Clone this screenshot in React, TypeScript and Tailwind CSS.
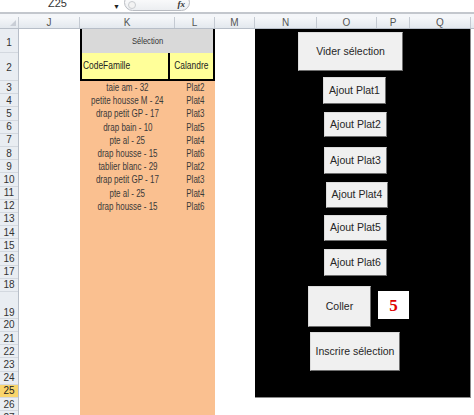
import React from "react";

const F = "font-['Liberation_Sans',Arial,sans-serif]";

const items = [
  ["taie am - 32", "Plat2"],
  ["petite housse M - 24", "Plat4"],
  ["drap petit GP - 17", "Plat3"],
  ["drap bain - 10", "Plat5"],
  ["pte al - 25", "Plat4"],
  ["drap housse - 15", "Plat6"],
  ["tablier blanc - 29", "Plat2"],
  ["drap petit GP - 17", "Plat3"],
  ["pte al - 25", "Plat4"],
  ["drap housse - 15", "Plat6"],
];

const cols = [
  { label: "J", w: "w-[61px]" },
  { label: "K", w: "w-[95px]" },
  { label: "L", w: "w-[40px]" },
  { label: "M", w: "w-[40px]" },
  { label: "N", w: "w-[62px]" },
  { label: "O", w: "w-[60px]" },
  { label: "P", w: "w-[33px]" },
  { label: "Q", w: "w-[61px]" },
];

type RowHead = { n: number; h: string; cls?: string };

const rowHeads: RowHead[] = [
  { n: 1, h: "h-[24px]", cls: "items-end pb-[4px]" },
  { n: 2, h: "h-[28px]", cls: "items-end pb-[7px]" },
  ...[3, 4, 5, 6, 7, 8, 9, 10, 11, 12, 13, 14, 15, 16, 17, 18].map((n) => ({ n, h: "h-[13.2px]" })),
  { n: 19, h: "h-[26.8px]", cls: "items-end pb-[0px]" },
  ...[20, 21, 22, 23, 24, 25, 26, 27].map((n) => ({ n, h: "h-[13.2px]" })),
];

// cell text in the sheet is a narrow face; squeeze the regular one
function Narrow({ children, origin = "origin-center" }: { children: React.ReactNode; origin?: string }) {
  return <span className={"inline-block whitespace-nowrap scale-x-[0.8] " + origin}>{children}</span>;
}

function Btn({ label, className }: { label: string; className: string }) {
  return (
    <button
      className={
        "flex items-center justify-center bg-[#f0f0f0] border border-t-[#dcdcdc] border-l-[#dcdcdc] border-r-[#6e6e6e] border-b-[#6e6e6e] text-[10.5px] text-[#262626] " +
        F +
        " " +
        className
      }
    >
      {label}
    </button>
  );
}

export default function App() {
  return (
    <div className={"w-[474px] h-[415px] overflow-hidden bg-white " + F}>
      {/* formula bar */}
      <div className="flex h-[12px] items-start overflow-hidden">
        <div className="w-[113px] flex justify-center">
          <span className="text-[11px] leading-[11px] -mt-[2px] ml-[2px] text-[#333]">Z25</span>
        </div>
        <span className="text-[7px] leading-[7px] mt-[3px] text-[#222]">▼</span>
        <div className="ml-[4px] -mt-[6px] h-[17px] w-[66px] rounded-[9px] border border-[#b9bcc2] bg-gradient-to-b from-[#ffffff] to-[#eceef1] flex items-end justify-between px-[3px] pb-[1px]">
          <span className="w-[8px] h-[8px] rounded-full border border-[#c9ccd0] bg-[#f3f3f3]" />
          <span className="font-['Liberation_Serif',serif] italic font-bold text-[9px] leading-[9px] text-[#333] mr-[1px]">
            fx
          </span>
        </div>
      </div>
      <div className="h-[2px] bg-[#c3c7cd]" />
      <div className="h-[3px] bg-[#f4f6f9]" />

      {/* column headers */}
      <div className="flex h-[12px] border-b border-[#b7bec8] bg-gradient-to-b from-[#f6f8fa] to-[#e3e8ee] text-[10px] leading-[11px] text-[#555]">
        <div className="w-[19px] border-r border-[#c4cad2] flex items-end justify-end pr-[2px] pb-[2px]">
          <div className="w-0 h-0 border-l-[6px] border-l-transparent border-b-[6px] border-b-[#c9ced6]" />
        </div>
        {cols.map((c) => (
          <div key={c.label} className={c.w + " border-r border-[#c4cad2] flex items-center justify-center"}>
            {c.label}
          </div>
        ))}
        <div className="w-[3px]" />
      </div>

      {/* sheet body */}
      <div className="flex">
        {/* row headers */}
        <div className="w-[19px] flex flex-col bg-[#e9edf2] border-r border-[#b7bec8] text-[10px] leading-[11px] text-[#333]">
          {rowHeads.map((r) => (
            <div
              key={r.n}
              className={
                r.h +
                " shrink-0 flex justify-center border-b border-[#d3d8df] " +
                (r.cls ?? "items-center") +
                (r.n === 25 ? " bg-[#f9d56c] text-[#222]" : "")
              }
            >
              {r.n}
            </div>
          ))}
        </div>

        {/* J */}
        <div className="w-[61px]" />

        {/* K:L */}
        <div className="w-[135px] flex flex-col">
          <div className="h-[24px] bg-[#d9d9d9] border-x-2 border-black flex items-center justify-center text-[9.5px] text-[#333]">
            <Narrow>Sélection</Narrow>
          </div>
          <div className="h-[28px] flex bg-[#ffff99] border-x-2 border-b-2 border-black text-[10.5px] text-[#222]">
            <div className="w-[93px] border-r-2 border-black flex items-center pl-[1px]">
              <Narrow origin="origin-left">CodeFamille</Narrow>
            </div>
            <div className="flex-1 flex items-center justify-center">
              <Narrow>Calandre</Narrow>
            </div>
          </div>
          <div className="h-[340px] bg-[#fac090] flex flex-col">
            {items.map(([a, b], i) => (
              <div key={i} className="h-[13.2px] shrink-0 flex items-center text-[10px] leading-[11px] text-[#3a3a3a]">
                <div className="w-[95px] text-center">
                  <Narrow>{a}</Narrow>
                </div>
                <div className="w-[40px] text-center">
                  <Narrow>{b}</Narrow>
                </div>
              </div>
            ))}
          </div>
        </div>

        {/* M */}
        <div className="w-[40px]" />

        {/* N:Q panel */}
        <div className="w-[216px] flex flex-col">
          <div className="h-[369px] bg-black border-r border-b border-[#8a8a8a] flex flex-col items-start">
            <Btn label="Vider sélection" className="ml-[43px] mt-[3px] w-[105px] h-[39px]" />
            <Btn label="Ajout Plat1" className="ml-[68px] mt-[6px] w-[63px] h-[27px]" />
            <Btn label="Ajout Plat2" className="ml-[69px] mt-[8px] w-[63px] h-[25px]" />
            <Btn label="Ajout Plat3" className="ml-[69px] mt-[10px] w-[63px] h-[27px]" />
            <Btn label="Ajout Plat4" className="ml-[71px] mt-[8px] w-[62px] h-[26px]" />
            <Btn label="Ajout Plat5" className="ml-[69px] mt-[7px] w-[63px] h-[26px]" />
            <Btn label="Ajout Plat6" className="ml-[69px] mt-[8px] w-[63px] h-[27px]" />
            <div className="ml-[53px] mt-[10px] flex items-start">
              <Btn label="Coller" className="w-[63px] h-[41px]" />
              <div className="ml-[7px] mt-[5px] w-[31px] h-[28px] bg-white flex items-center justify-center">
                <span className="font-['Liberation_Serif',serif] font-bold text-[17px] leading-[17px] text-[#e00000]">5</span>
              </div>
            </div>
            <Btn label="Inscrire sélection" className="ml-[55px] mt-[5px] w-[90px] h-[39px]" />
          </div>
        </div>
      </div>
    </div>
  );
}
